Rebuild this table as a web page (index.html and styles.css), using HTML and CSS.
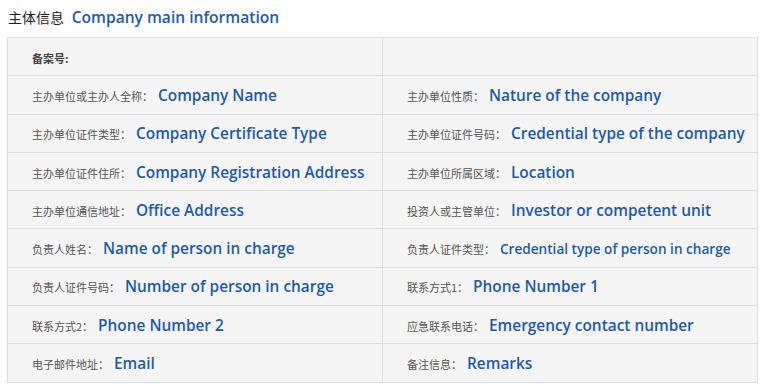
FILE: index.html
```html
<!DOCTYPE html>
<html>
<head>
  <title>主体信息</title>
  <link rel="stylesheet" href="styles.css">
</head>
<body>
  <div class="section">
    <h4 class="section-title">主体信息 <span class="en">Company main information</span></h4>
    <table class="info-table">
      <tr>
        <td><span class="label strong">备案号:</span></td>
        <td></td>
      </tr>
      <tr>
        <td><span class="label">主办单位或主办人全称：</span><span class="value">Company Name</span></td>
        <td><span class="label">主办单位性质：</span><span class="value">Nature of the company</span></td>
      </tr>
      <tr>
        <td><span class="label">主办单位证件类型：</span><span class="value">Company Certificate Type</span></td>
        <td><span class="label">主办单位证件号码：</span><span class="value">Credential type of the company</span></td>
      </tr>
      <tr>
        <td><span class="label">主办单位证件住所：</span><span class="value">Company Registration Address</span></td>
        <td><span class="label">主办单位所属区域：</span><span class="value">Location</span></td>
      </tr>
      <tr>
        <td><span class="label">主办单位通信地址：</span><span class="value">Office Address</span></td>
        <td><span class="label">投资人或主管单位：</span><span class="value">Investor or competent unit</span></td>
      </tr>
      <tr>
        <td><span class="label">负责人姓名：</span><span class="value">Name of person in charge</span></td>
        <td><span class="label">负责人证件类型：</span><span class="value small">Credential type of person in charge</span></td>
      </tr>
      <tr>
        <td><span class="label">负责人证件号码：</span><span class="value">Number of person in charge</span></td>
        <td><span class="label">联系方式1：</span><span class="value">Phone Number 1</span></td>
      </tr>
      <tr>
        <td><span class="label">联系方式2：</span><span class="value">Phone Number 2</span></td>
        <td><span class="label">应急联系电话：</span><span class="value">Emergency contact number</span></td>
      </tr>
      <tr>
        <td><span class="label">电子邮件地址：</span><span class="value">Email</span></td>
        <td><span class="label">备注信息：</span><span class="value">Remarks</span></td>
      </tr>
    </table>
  </div>
</body>
</html>
```

FILE: styles.css
```css
body {
  margin: 0;
  padding: 6px 10px 0 7px;
  background: #fff;
  font-family: 'Open Sans', 'Noto Sans CJK SC', sans-serif;
  color: #333;
}

.section-title {
  margin: 0 0 8px 1px;
  font-size: 14px;
  font-weight: 400;
  line-height: 22px;
  color: #222;
}

.section-title .en {
  margin-left: 4px;
  font-size: 15.6px;
  font-weight: 600;
  color: #1b5cab;
}

.info-table {
  width: 751px;
  border-collapse: collapse;
  background: #f5f5f5;
  table-layout: fixed;
}

.info-table td {
  height: 37.3px;
  padding: 0 0 0 24px;
  border: 1px solid #dddddd;
  white-space: nowrap;
  vertical-align: middle;
}

.info-table td:first-child {
  width: 350px;
}

.label {
  font-size: 11px;
  color: #555;
  margin-right: 5px;
  font-family: 'Noto Sans CJK SC', sans-serif;
}

.label.strong {
  font-weight: 700;
  color: #444;
}

.value {
  font-size: 15.4px;
  font-weight: 600;
  color: #1b5cab;
}

.value.small {
  font-size: 13.6px;
}
```
